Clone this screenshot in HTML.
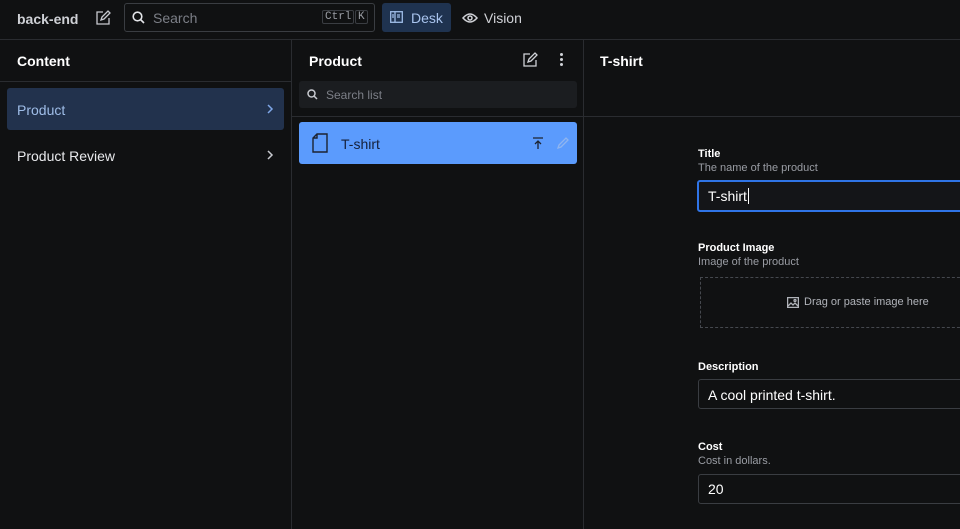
<!DOCTYPE html><html><head><style>
*{box-sizing:border-box;margin:0;padding:0}
body{width:960px;height:529px;background:#101112;font-family:"Liberation Sans",sans-serif;color:#e3e4e8;position:relative;overflow:hidden}
.a{position:absolute}
.b{font-weight:bold;font-size:14px;color:#fff}
svg{position:absolute;fill:none;stroke:currentColor;stroke-width:1.3}
</style></head><body>
<div class="a" style="left:0;top:39px;width:960px;height:1px;background:#2a2c30"></div>
<div class="a b" style="left:17px;top:11px;color:#cfd1d6">back-end</div>
<svg style="left:95px;top:10px;color:#c8cad0" width="16" height="16" viewBox="0 0 16 16"><path d="M8 2H2v12h12V8M6 10l1-3 6-6 2 2-6 6z"/></svg>
<div class="a" style="left:124px;top:3px;width:251px;height:29px;border:1px solid #3a3d42;border-radius:3px"></div>
<svg style="left:132px;top:11px;color:#e3e4e8;stroke-width:1.6" width="13" height="13" viewBox="0 0 13 13"><circle cx="5.5" cy="5.5" r="4.3"/><path d="M8.5 8.5l3.5 3.5"/></svg>
<div class="a" style="left:153px;top:10px;font-size:14px;color:#7c7f87">Search</div>
<div class="a" style="left:322px;top:10px;font:11px 'Liberation Mono',monospace;color:#9a9da4;border:1px solid #3a3d42;border-radius:2px;padding:0 2px">Ctrl</div>
<div class="a" style="left:355px;top:10px;font:11px 'Liberation Mono',monospace;color:#9a9da4;border:1px solid #3a3d42;border-radius:2px;padding:0 2px">K</div>
<div class="a" style="left:382px;top:3px;width:69px;height:29px;background:#1f3350;border-radius:3px"></div>
<svg style="left:390px;top:11px;color:#9fbde8" width="13" height="12" viewBox="0 0 13 12"><rect x=".7" y=".7" width="11.6" height="10.6"/><path d="M5 .7v10.6M2 4h2M2 6h2M7 4h3M7 6h3"/></svg>
<div class="a" style="left:411px;top:10px;font-size:14px;color:#a9c4ee">Desk</div>
<svg style="left:462px;top:12px;color:#d0d2d7;stroke-width:1.5" width="16" height="12" viewBox="0 0 16 12"><path d="M1 6q7-8 14 0q-7 8-14 0z"/><circle cx="8" cy="6" r="2"/></svg>
<div class="a" style="left:484px;top:10px;font-size:14px;color:#d0d2d7">Vision</div>

<div class="a" style="left:291px;top:40px;width:1px;height:489px;background:#2a2c30"></div>
<div class="a" style="left:583px;top:40px;width:1px;height:489px;background:#2a2c30"></div>
<div class="a" style="left:0;top:81px;width:291px;height:1px;background:#2a2c30"></div>
<div class="a" style="left:292px;top:116px;width:668px;height:1px;background:#2a2c30"></div>

<div class="a b" style="left:17px;top:53px">Content</div>
<div class="a" style="left:7px;top:88px;width:277px;height:42px;background:#22324d;border-radius:3px"></div>
<div class="a" style="left:17px;top:102px;font-size:14px;color:#9fbde8">Product</div>
<svg style="left:266px;top:104px;color:#7fa7e8;stroke-width:1.5" width="8" height="10" viewBox="0 0 8 10"><path d="M2 1l4 4-4 4"/></svg>
<div class="a" style="left:17px;top:148px;font-size:14px;color:#e8e9ec">Product Review</div>
<svg style="left:266px;top:150px;color:#c8cad0;stroke-width:1.5" width="8" height="10" viewBox="0 0 8 10"><path d="M2 1l4 4-4 4"/></svg>

<div class="a b" style="left:309px;top:53px">Product</div>
<svg style="left:522px;top:52px;color:#d0d2d7" width="16" height="16" viewBox="0 0 16 16"><path d="M8 2H2v12h12V8M6 10l1-3 6-6 2 2-6 6z"/></svg>
<div class="a" style="left:560px;top:53px;width:3px;height:3px;border-radius:50%;background:#d0d2d7;box-shadow:0 5px 0 #d0d2d7,0 10px 0 #d0d2d7"></div>
<div class="a" style="left:299px;top:81px;width:278px;height:27px;background:#1b1d20;border-radius:3px"></div>
<svg style="left:307px;top:89px;color:#c8cad0;stroke-width:1.5" width="11" height="11" viewBox="0 0 11 11"><circle cx="4.5" cy="4.5" r="3.5"/><path d="M7 7l3 3"/></svg>
<div class="a" style="left:326px;top:88px;font-size:12px;color:#7c7f87">Search list</div>
<div class="a" style="left:299px;top:122px;width:278px;height:42px;background:#5b9bfd;border-radius:3px"></div>
<svg style="left:312px;top:133px;color:#1c2330;stroke-width:1.4" width="16" height="20" viewBox="0 0 16 20"><path d="M5 1h10v18H1V5z M5 1v4H1"/></svg>
<div class="a" style="left:341px;top:136px;font-size:14px;color:#15203a">T-shirt</div>
<svg style="left:532px;top:137px;color:#1c2330" width="12" height="13" viewBox="0 0 12 13"><path d="M1 1h10M6 12V4M3 7l3-3 3 3"/></svg>
<svg style="left:557px;top:137px;color:#8fb5f0" width="12" height="12" viewBox="0 0 12 12"><path d="M1 11l1-3 7-7 2 2-7 7z"/></svg>

<div class="a b" style="left:600px;top:53px">T-shirt</div>
<div class="a" style="left:698px;top:148px;font-size:11px;font-weight:bold;color:#fff">Title</div>
<div class="a" style="left:698px;top:162px;font-size:11px;color:#9a9da4">The name of the product</div>
<div class="a" style="left:697px;top:180px;width:270px;height:32px;border:2px solid #2f74e6;border-radius:3px;background:#141518"></div>
<div class="a" style="left:708px;top:188px;font-size:14px;color:#fff">T-shirt<span style="border-left:1px solid #fff;margin-left:1px"></span></div>
<div class="a" style="left:698px;top:242px;font-size:11px;font-weight:bold;color:#fff">Product Image</div>
<div class="a" style="left:698px;top:256px;font-size:11px;color:#9a9da4">Image of the product</div>
<div class="a" style="left:700px;top:277px;width:270px;height:51px;border:1px dashed #45484e"></div>
<svg style="left:787px;top:297px;color:#b0b3b9" width="12" height="11" viewBox="0 0 12 11"><rect x=".6" y=".6" width="10.8" height="9.8"/><path d="M1 9l3-3 2 2 2-2 3 3"/><circle cx="8" cy="3.5" r="1"/></svg>
<div class="a" style="left:804px;top:296px;font-size:11px;color:#b0b3b9">Drag or paste image here</div>
<div class="a" style="left:698px;top:361px;font-size:11px;font-weight:bold;color:#fff">Description</div>
<div class="a" style="left:698px;top:379px;width:270px;height:30px;border:1px solid #3a3d42;border-radius:3px"></div>
<div class="a" style="left:708px;top:387px;font-size:14px;color:#fff">A cool printed t-shirt.</div>
<div class="a" style="left:698px;top:441px;font-size:11px;font-weight:bold;color:#fff">Cost</div>
<div class="a" style="left:698px;top:455px;font-size:11px;color:#9a9da4">Cost in dollars.</div>
<div class="a" style="left:698px;top:474px;width:270px;height:30px;border:1px solid #3a3d42;border-radius:3px"></div>
<div class="a" style="left:708px;top:481px;font-size:14px;color:#fff">20</div>
</body></html>
